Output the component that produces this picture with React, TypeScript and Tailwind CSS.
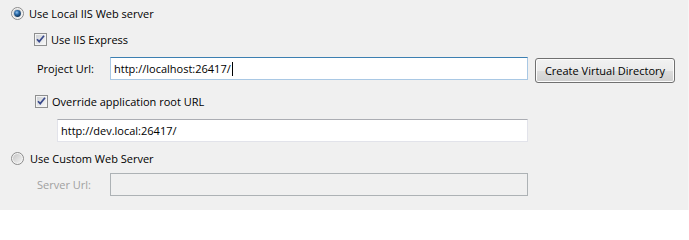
import React from "react";

function Radio({ checked }: { checked?: boolean }) {
  const id = checked ? "rc" : "ru";
  return (
    <svg width="13" height="13" viewBox="0 0 13 13" className="shrink-0">
      <defs>
        <linearGradient id={id + "o"} x1="0" y1="0" x2="1" y2="1">
          <stop offset="0" stopColor="#c6c6c6" />
          <stop offset="1" stopColor="#f4f4f4" />
        </linearGradient>
        <radialGradient id={id + "d"} cx="0.4" cy="0.35" r="0.7">
          <stop offset="0" stopColor="#8fc2f0" />
          <stop offset="0.45" stopColor="#2a6aa8" />
          <stop offset="1" stopColor="#0d2c4c" />
        </radialGradient>
      </defs>
      <circle cx="6.5" cy="6.5" r="6" fill="#f5f5f5" stroke="#8a8a8a" strokeWidth="1" />
      <circle cx="6.5" cy="6.5" r="4.6" fill={`url(#${id}o)`} />
      {checked && <circle cx="6.5" cy="6.5" r="3.4" fill={`url(#${id}d)`} />}
    </svg>
  );
}

function Check() {
  return (
    <svg width="13" height="13" viewBox="0 0 13 13" className="shrink-0">
      <defs>
        <linearGradient id="cbg" x1="0" y1="0" x2="1" y2="1">
          <stop offset="0" stopColor="#cfd2d6" />
          <stop offset="1" stopColor="#f7f7f7" />
        </linearGradient>
      </defs>
      <rect x="0.5" y="0.5" width="12" height="12" fill="#f4f4f4" stroke="#8e8f8f" />
      <rect x="2" y="2" width="9" height="9" fill="url(#cbg)" />
      <path d="M3 6.2 L5.2 8.6 L10 2.8" fill="none" stroke="#3a4a8c" strokeWidth="1.7" />
    </svg>
  );
}

export default function App() {
  return (
    <div
      className="relative w-[689px] h-[210px] bg-[#f0f0f0] text-[11px] leading-[15px] text-black flex flex-col overflow-hidden border-r border-[#f6f6f6]"
      style={{ fontFamily: '"Open Sans", "Liberation Sans", sans-serif' }}
    >
      <div className="mt-[7px] h-[13px] flex items-center pl-[11px] gap-[5px]">
        <Radio checked />
        <span>Use Local IIS Web server</span>
      </div>
      <div className="mt-[13px] h-[13px] flex items-center pl-[34px] gap-[4px]">
        <Check />
        <span>Use IIS Express</span>
      </div>
      <div className="mt-[11px] h-[26px] flex items-start pl-[37px]">
        <div className="w-[73px] h-[23px] flex items-center">Project Url:</div>
        <div className="w-[418px] h-[23px] bg-white border border-[#a9c8e4] border-t-[#3c7fb1] flex items-center pl-[3px]">
          <span>http://localhost:26417/</span>
          <span className="inline-block w-px h-[14px] bg-black ml-[1px]" />
        </div>
        <button className="ml-[7px] mt-[1px] w-[140px] h-[25px] rounded-[3px] border border-[#707070] bg-[linear-gradient(#f2f2f2_0%,#ebebeb_50%,#dddddd_50%,#cfcfcf_100%)] shadow-[inset_0_0_0_1px_#fcfcfc] flex items-center justify-center">
          Create Virtual Directory
        </button>
      </div>
      <div className="mt-[12px] h-[13px] flex items-center pl-[35px] gap-[4px]">
        <Check />
        <span>Override application root URL</span>
      </div>
      <div className="mt-[11px] h-[23px] pl-[57px] flex">
        <div className="w-[471px] h-[23px] bg-white border border-[#e2e3ea] border-t-[#abadb3] flex items-center pl-[3px]">
          http://dev.local:26417/
        </div>
      </div>
      <div className="mt-[10px] h-[13px] flex items-center pl-[11px] gap-[6px]">
        <Radio />
        <span>Use Custom Web Server</span>
      </div>
      <div className="mt-[8px] h-[23px] flex items-center pl-[37px]">
        <div className="w-[73px] text-[#a0a0a0]">Server Url:</div>
        <div className="w-[418px] h-[23px] border border-[#adb2b5] bg-[#f0f0f0]" />
      </div>
    </div>
  );
}
